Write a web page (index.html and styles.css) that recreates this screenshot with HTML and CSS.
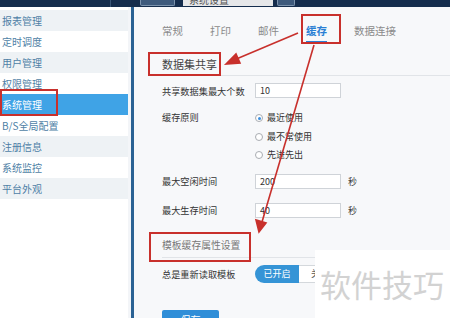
FILE: index.html
```html
<!DOCTYPE html>
<html lang="zh">
<head>
<meta charset="utf-8">
<title>系统设置 - 缓存</title>
<link rel="stylesheet" href="styles.css">
</head>
<body>
<div class="page">
  <header class="topbar">
    <div class="top-left"><span class="top-div"></span></div>
    <div class="top-tabs">
      <span class="ttab ttab-dark"></span>
      <span class="ttab ttab-active">系统设置</span>
      <span class="ttab ttab-small"></span>
    </div>
  </header>
  <div class="body">
    <nav class="sidebar">
      <div class="nav-item alt">报表管理</div>
      <div class="nav-item">定时调度</div>
      <div class="nav-item alt">用户管理</div>
      <div class="nav-item">权限管理</div>
      <div class="nav-item selected">系统管理</div>
      <div class="nav-item">B/S全局配置</div>
      <div class="nav-item alt">注册信息</div>
      <div class="nav-item">系统监控</div>
      <div class="nav-item alt">平台外观</div>
    </nav>
    <div class="gutter"></div>
    <main class="main">
      <div class="tabs">
        <span class="tab">常规</span>
        <span class="tab">打印</span>
        <span class="tab">邮件</span>
        <span class="tab active">缓存</span>
        <span class="tab">数据连接</span>
      </div>
      <div class="section-title first">数据集共享</div>
      <div class="row row-1">
        <span class="label">共享数据集最大个数</span>
        <span class="input">10</span>
      </div>
      <div class="row row-radio">
        <span class="label">缓存原则</span>
        <div class="radios">
          <div class="radio-line"><span class="radio checked"></span>最近使用</div>
          <div class="radio-line"><span class="radio"></span>最不常使用</div>
          <div class="radio-line"><span class="radio"></span>先进先出</div>
        </div>
      </div>
      <div class="row row-idle">
        <span class="label">最大空闲时间</span>
        <span class="input">200</span>
        <span class="unit">秒</span>
      </div>
      <div class="row row-live">
        <span class="label">最大生存时间</span>
        <span class="input">40</span>
        <span class="unit">秒</span>
      </div>
      <div class="section-title second">模板缓存属性设置</div>
      <div class="row row-toggle">
        <span class="label">总是重新读取模板</span>
        <div class="toggle"><span class="on">已开启</span><span class="off">关</span></div>
      </div>
      <div class="save-row"><span class="save">保存</span></div>
    </main>
  </div>
  <div class="watermark">软件技巧</div>
  <svg class="marks" width="450" height="318" viewBox="0 0 450 318">
    <g fill="none" stroke="#c8302c" stroke-width="2">
      <rect x="1" y="90" width="56" height="25"/>
      <rect x="302" y="15" width="38" height="28"/>
      <rect x="149" y="53" width="71" height="22"/>
      <rect x="150" y="233" width="100" height="28"/>
    </g>
    <g stroke="#c8302c" stroke-width="1.6" fill="#c8302c">
      <line x1="298" y1="33" x2="234" y2="60"/>
      <polygon points="226,64 236,54 240,63"/>
      <line x1="314" y1="45" x2="262" y2="222"/>
      <polygon points="259,232 256,220 266,223"/>
    </g>
  </svg>
</div>
</body>
</html>
```

FILE: styles.css
```css
* { box-sizing: border-box; }
html, body { margin: 0; padding: 0; }
body {
  width: 450px;
  height: 318px;
  overflow: hidden;
  font-family: "Noto Sans CJK SC", "Noto Sans", sans-serif;
  background: #f7f8fa;
}
.page {
  position: relative;
  width: 450px;
  height: 318px;
  overflow: hidden;
  display: flex;
  flex-direction: column;
}
.topbar {
  height: 7px;
  background: #152d4d;
  display: flex;
  flex: none;
}
.top-left {
  width: 131px;
  position: relative;
}
.top-div {
  position: absolute;
  left: 110px;
  top: 0;
  width: 1px;
  height: 7px;
  background: #3a5677;
}
.top-tabs {
  display: flex;
  align-items: flex-start;
  padding-left: 9px;
  gap: 6px;
}
.ttab { height: 6px; display: block; }
.ttab-dark {
  width: 35px;
  background: #3e5a7c;
  border: 1px solid #7c93ad;
  border-top: none;
  border-radius: 0 0 2px 2px;
}
.ttab-active {
  width: 90px;
  margin-left: 2px;
  background: #e6e7e9;
  font-size: 10px;
  line-height: 0px;
  color: #555;
  padding-left: 6px;
  overflow: hidden;
}
.ttab-small {
  width: 18px;
  margin-left: -2px;
  background: #3e5a7c;
  border: 1px solid #7c93ad;
  border-top: none;
  border-radius: 0 0 2px 2px;
}
.body {
  flex: 1;
  display: flex;
  min-height: 0;
}
.sidebar {
  width: 128px;
  flex: none;
  background: #ffffff;
  padding-top: 3px;
}
.nav-item {
  height: 21px;
  line-height: 21px;
  padding-left: 2px;
  font-size: 10px;
  color: #4f7fa6;
  background: #ffffff;
}
.nav-item.alt { background: #eef2f5; }
.nav-item.selected { background: #3fa3e6; color: #ffffff; }
.gutter {
  width: 6px;
  flex: none;
  background: #f3f5f8;
  border-right: 3px solid #2b6294;
}
.main {
  flex: 1;
  padding-left: 28px;
  display: flex;
  flex-direction: column;
  background: #f7f8fa;
}
.tabs {
  margin-top: 13px;
  height: 23px;
  display: flex;
  gap: 27px;
  flex: none;
}
.tab {
  height: 23px;
  line-height: 22px;
  font-size: 10.5px;
  color: #8a8a8a;
  border-bottom: 2px solid transparent;
}
.tab.active {
  color: #2a7fd4;
  font-weight: bold;
  border-bottom-color: #2a7fd4;
}
.section-title {
  border-bottom: 1px solid #e1e4e8;
  color: #555;
  flex: none;
}
.section-title.first {
  margin-top: 10px;
  height: 23px;
  line-height: 22px;
  font-size: 11px;
  color: #444;
}
.section-title.second {
  margin-top: 15px;
  height: 25px;
  line-height: 24px;
  font-size: 9.8px;
  color: #777;
}
.row {
  display: flex;
  align-items: center;
  flex: none;
}
.label {
  width: 93px;
  flex: none;
  font-size: 9.2px;
  color: #333;
}
.input {
  width: 86px;
  height: 15px;
  background: #ffffff;
  border: 1px solid #cfd3d8;
  font-size: 9px;
  line-height: 13px;
  padding-left: 4px;
  color: #333;
}
.unit {
  margin-left: 7px;
  font-size: 9px;
  color: #444;
}
.row-1 { margin-top: 7px; height: 15px; }
.row-radio { margin-top: 11px; align-items: flex-start; }
.row-radio .label { line-height: 16px; }
.radios { display: flex; flex-direction: column; }
.radio-line {
  height: 18.5px;
  line-height: 18px;
  font-size: 9px;
  color: #333;
  display: flex;
  align-items: center;
}
.radio {
  width: 8px;
  height: 8px;
  border-radius: 50%;
  border: 1px solid #a9adb2;
  background: #fff;
  margin-right: 4px;
  position: relative;
  flex: none;
}
.radio.checked::after {
  content: "";
  position: absolute;
  left: 1.5px;
  top: 1.5px;
  width: 3px;
  height: 3px;
  border-radius: 50%;
  background: #3b8fe0;
}
.row-idle { margin-top: 9px; height: 15px; }
.row-live { margin-top: 14px; height: 15px; }
.row-toggle { margin-top: 7px; height: 18px; }
.toggle {
  display: flex;
  height: 18px;
}
.toggle .on {
  width: 44px;
  background: #3594d6;
  color: #fff;
  font-size: 9px;
  line-height: 18px;
  text-align: center;
  border-radius: 9px 0 0 9px;
}
.toggle .off {
  width: 34px;
  background: #fff;
  border: 1px solid #d4d8dc;
  border-left: none;
  border-radius: 0 9px 9px 0;
  color: #555;
  font-size: 9px;
  line-height: 16px;
  padding-left: 12px;
}
.save-row { margin-top: 22px; flex: none; }
.save {
  display: inline-block;
  width: 57px;
  height: 22px;
  background: #2f8ed8;
  border-radius: 2px;
  color: #fff;
  font-size: 10px;
  line-height: 20px;
  text-align: center;
}
.watermark {
  position: absolute;
  left: 315px;
  top: 250px;
  right: 0;
  bottom: 0;
  background: #ffffff;
  color: #d2d2d2;
  font-size: 31px;
  line-height: 68px;
  padding-left: 5px;
}
.marks {
  position: absolute;
  left: 0;
  top: 0;
  pointer-events: none;
}
```
